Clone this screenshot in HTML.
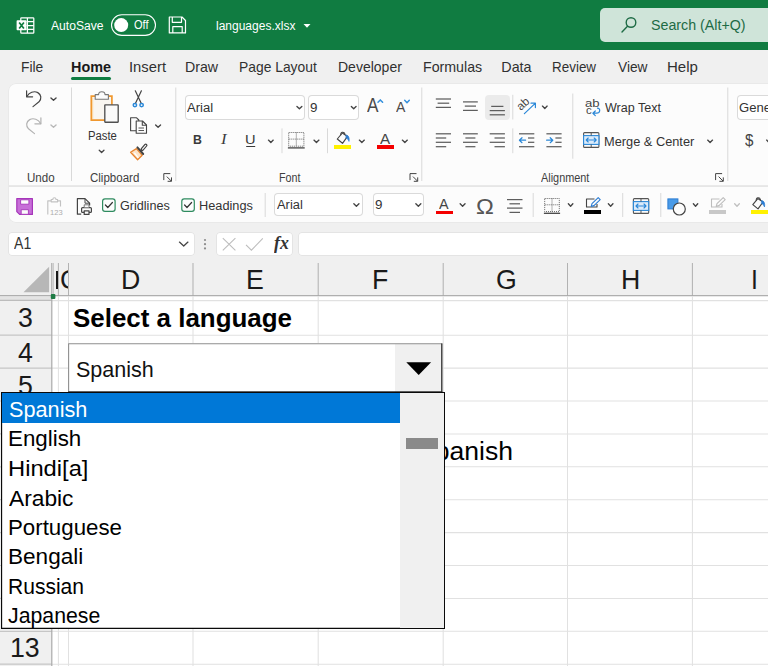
<!DOCTYPE html>
<html><head><meta charset="utf-8"><title>languages.xlsx - Excel</title>
<style>
html,body{margin:0;padding:0;}
body{width:768px;height:666px;overflow:hidden;position:relative;background:#F0F0F0;font-family:"Liberation Sans", sans-serif;}
.t{position:absolute;white-space:nowrap;transform-origin:0 0;display:block;}
.b{position:absolute;box-sizing:border-box;}
svg.ov{position:absolute;left:0;top:0;}
#root{position:absolute;left:0;top:0;width:768px;height:666px;overflow:hidden;}
</style></head><body><div id="root">
<div class="b" style="left:0px;top:0px;width:768px;height:50px;background:#107C41;"></div>
<div class="b" style="left:600px;top:8px;width:180px;height:34px;background:#CFE4D9;border-radius:5px;"></div>
<div class="b" style="left:8px;top:83px;width:782px;height:103px;background:#FCFCFC;box-shadow:inset 0 0 0 1px #E9E9E9;border-radius:8px 0 0 0;"></div>
<div class="b" style="left:8px;top:186px;width:782px;height:37px;background:#FCFCFC;box-shadow:inset 0 0 0 1px #E9E9E9;border-radius:0 0 0 8px;"></div>
<div class="b" style="left:8px;top:232px;width:186.5px;height:24px;background:#FFFFFF;box-shadow:inset 0 0 0 1px #E4E4E4;border-radius:4px;"></div>
<div class="b" style="left:216px;top:232px;width:76.5px;height:24px;background:#FFFFFF;box-shadow:inset 0 0 0 1px #E4E4E4;border-radius:4px;"></div>
<div class="b" style="left:298px;top:232px;width:492px;height:24px;background:#FFFFFF;box-shadow:inset 0 0 0 1px #E4E4E4;border-radius:4px;"></div>
<div class="b" style="left:52px;top:296.5px;width:716px;height:369.5px;background:#FFFFFF;"></div>
<svg class="ov" width="768" height="666" viewBox="0 0 768 666">
<line x1="52" y1="335.20" x2="768" y2="335.20" stroke="#E1E1E1" stroke-width="1.05"/>
<line x1="0" y1="335.20" x2="52" y2="335.20" stroke="#C6C6C6" stroke-width="1.2"/>
<line x1="52" y1="368.10" x2="768" y2="368.10" stroke="#E1E1E1" stroke-width="1.05"/>
<line x1="0" y1="368.10" x2="52" y2="368.10" stroke="#C6C6C6" stroke-width="1.2"/>
<line x1="52" y1="401.00" x2="768" y2="401.00" stroke="#E1E1E1" stroke-width="1.05"/>
<line x1="0" y1="401.00" x2="52" y2="401.00" stroke="#C6C6C6" stroke-width="1.2"/>
<line x1="52" y1="433.90" x2="768" y2="433.90" stroke="#E1E1E1" stroke-width="1.05"/>
<line x1="0" y1="433.90" x2="52" y2="433.90" stroke="#C6C6C6" stroke-width="1.2"/>
<line x1="52" y1="466.80" x2="768" y2="466.80" stroke="#E1E1E1" stroke-width="1.05"/>
<line x1="0" y1="466.80" x2="52" y2="466.80" stroke="#C6C6C6" stroke-width="1.2"/>
<line x1="52" y1="499.70" x2="768" y2="499.70" stroke="#E1E1E1" stroke-width="1.05"/>
<line x1="0" y1="499.70" x2="52" y2="499.70" stroke="#C6C6C6" stroke-width="1.2"/>
<line x1="52" y1="532.60" x2="768" y2="532.60" stroke="#E1E1E1" stroke-width="1.05"/>
<line x1="0" y1="532.60" x2="52" y2="532.60" stroke="#C6C6C6" stroke-width="1.2"/>
<line x1="52" y1="565.50" x2="768" y2="565.50" stroke="#E1E1E1" stroke-width="1.05"/>
<line x1="0" y1="565.50" x2="52" y2="565.50" stroke="#C6C6C6" stroke-width="1.2"/>
<line x1="52" y1="598.40" x2="768" y2="598.40" stroke="#E1E1E1" stroke-width="1.05"/>
<line x1="0" y1="598.40" x2="52" y2="598.40" stroke="#C6C6C6" stroke-width="1.2"/>
<line x1="52" y1="631.30" x2="768" y2="631.30" stroke="#E1E1E1" stroke-width="1.05"/>
<line x1="0" y1="631.30" x2="52" y2="631.30" stroke="#C6C6C6" stroke-width="1.2"/>
<line x1="52" y1="664.20" x2="768" y2="664.20" stroke="#E1E1E1" stroke-width="1.05"/>
<line x1="0" y1="664.20" x2="52" y2="664.20" stroke="#C6C6C6" stroke-width="1.2"/>
<line x1="52" y1="300.6" x2="768" y2="300.6" stroke="#E1E1E1" stroke-width="1.05"/>
<rect x="0" y="296" width="52" height="4" fill="#E4E4E4"/>
<line x1="0" y1="300.3" x2="52" y2="300.3" stroke="#B0B0B0" stroke-width="1"/>
<line x1="58.4" y1="296.5" x2="58.4" y2="666" stroke="#E1E1E1" stroke-width="1.05"/>
<line x1="58.4" y1="263" x2="58.4" y2="296" stroke="#B2B2B2" stroke-width="1.05"/>
<line x1="68.5" y1="296.5" x2="68.5" y2="666" stroke="#E1E1E1" stroke-width="1.05"/>
<line x1="68.5" y1="263" x2="68.5" y2="296" stroke="#B2B2B2" stroke-width="1.05"/>
<line x1="193" y1="296.5" x2="193" y2="666" stroke="#E1E1E1" stroke-width="1.05"/>
<line x1="193" y1="263" x2="193" y2="296" stroke="#B2B2B2" stroke-width="1.05"/>
<line x1="318.2" y1="296.5" x2="318.2" y2="666" stroke="#E1E1E1" stroke-width="1.05"/>
<line x1="318.2" y1="263" x2="318.2" y2="296" stroke="#B2B2B2" stroke-width="1.05"/>
<line x1="443.2" y1="296.5" x2="443.2" y2="666" stroke="#E1E1E1" stroke-width="1.05"/>
<line x1="443.2" y1="263" x2="443.2" y2="296" stroke="#B2B2B2" stroke-width="1.05"/>
<line x1="567.5" y1="296.5" x2="567.5" y2="666" stroke="#E1E1E1" stroke-width="1.05"/>
<line x1="567.5" y1="263" x2="567.5" y2="296" stroke="#B2B2B2" stroke-width="1.05"/>
<line x1="692.4" y1="296.5" x2="692.4" y2="666" stroke="#E1E1E1" stroke-width="1.05"/>
<line x1="692.4" y1="263" x2="692.4" y2="296" stroke="#B2B2B2" stroke-width="1.05"/>
<line x1="0" y1="295.6" x2="768" y2="295.6" stroke="#A8A8A8" stroke-width="1"/>
<line x1="51.8" y1="263" x2="51.8" y2="666" stroke="#ABABAB" stroke-width="1.2"/>
<line x1="53.4" y1="263" x2="53.4" y2="296" stroke="#C6C6C6" stroke-width="1"/>
<path d="M23.5 292.2h25.6v-25.4z" fill="#B7B7B7"/>
<rect x="50.8" y="294" width="4.6" height="5" rx="1" fill="#1E7B45"/>
</svg>
<span class="t" style="left:50.97px;top:19.00px;font-size:13.7px;line-height:13.7px;color:#FFFFFF;font-family:'Liberation Sans', sans-serif;transform:scaleX(0.8848);">AutoSave</span>
<span class="t" style="left:134.48px;top:19.00px;font-size:12px;line-height:12px;color:#FFFFFF;font-family:'Liberation Sans', sans-serif;transform:scaleX(0.9186);">Off</span>
<span class="t" style="left:215.69px;top:19.00px;font-size:13.7px;line-height:13.7px;color:#FFFFFF;font-family:'Liberation Sans', sans-serif;transform:scaleX(0.8768);">languages.xlsx</span>
<span class="t" style="left:650.86px;top:18.00px;font-size:14px;line-height:14px;color:#1E6B45;font-family:'Liberation Sans', sans-serif;transform:scaleX(1.0165);">Search (Alt+Q)</span>
<span class="t" style="left:21.36px;top:60.00px;font-size:14.3px;line-height:14.3px;color:#303030;font-family:'Liberation Sans', sans-serif;transform:scaleX(0.9654);">File</span>
<span class="t" style="left:70.53px;top:60.00px;font-size:14.3px;line-height:14.3px;color:#1A1A1A;font-family:'Liberation Sans', sans-serif;font-weight:bold;transform:scaleX(1.0055);">Home</span>
<span class="t" style="left:129.13px;top:60.00px;font-size:14.3px;line-height:14.3px;color:#303030;font-family:'Liberation Sans', sans-serif;transform:scaleX(1.0344);">Insert</span>
<span class="t" style="left:185.33px;top:60.00px;font-size:14.3px;line-height:14.3px;color:#303030;font-family:'Liberation Sans', sans-serif;transform:scaleX(0.9924);">Draw</span>
<span class="t" style="left:239.36px;top:60.00px;font-size:14.3px;line-height:14.3px;color:#303030;font-family:'Liberation Sans', sans-serif;transform:scaleX(0.9683);">Page Layout</span>
<span class="t" style="left:338.34px;top:60.00px;font-size:14.3px;line-height:14.3px;color:#303030;font-family:'Liberation Sans', sans-serif;transform:scaleX(0.9800);">Developer</span>
<span class="t" style="left:422.83px;top:60.00px;font-size:14.3px;line-height:14.3px;color:#303030;font-family:'Liberation Sans', sans-serif;transform:scaleX(0.9928);">Formulas</span>
<span class="t" style="left:501.32px;top:60.00px;font-size:14.3px;line-height:14.3px;color:#303030;font-family:'Liberation Sans', sans-serif;">Data</span>
<span class="t" style="left:551.89px;top:60.00px;font-size:14.3px;line-height:14.3px;color:#303030;font-family:'Liberation Sans', sans-serif;transform:scaleX(0.9397);">Review</span>
<span class="t" style="left:617.93px;top:60.00px;font-size:14.3px;line-height:14.3px;color:#303030;font-family:'Liberation Sans', sans-serif;transform:scaleX(0.9606);">View</span>
<span class="t" style="left:666.76px;top:60.00px;font-size:14.3px;line-height:14.3px;color:#303030;font-family:'Liberation Sans', sans-serif;transform:scaleX(1.0494);">Help</span>
<div class="b" style="left:71px;top:77px;width:39.5px;height:2.5px;background:#107C41;border-radius:1.5px;"></div>
<span class="t" style="left:27.10px;top:172.00px;font-size:12.3px;line-height:12.3px;color:#404040;font-family:'Liberation Sans', sans-serif;transform:scaleX(0.9409);">Undo</span>
<span class="t" style="left:90.42px;top:172.00px;font-size:12.3px;line-height:12.3px;color:#404040;font-family:'Liberation Sans', sans-serif;transform:scaleX(0.9364);">Clipboard</span>
<span class="t" style="left:278.61px;top:172.00px;font-size:12.3px;line-height:12.3px;color:#404040;font-family:'Liberation Sans', sans-serif;transform:scaleX(0.8726);">Font</span>
<span class="t" style="left:541.47px;top:172.00px;font-size:12.3px;line-height:12.3px;color:#404040;font-family:'Liberation Sans', sans-serif;transform:scaleX(0.8849);">Alignment</span>
<span class="t" style="left:87.57px;top:129.00px;font-size:13.7px;line-height:13.7px;color:#333333;font-family:'Liberation Sans', sans-serif;transform:scaleX(0.8260);">Paste</span>
<div class="b" style="left:184.7px;top:94.6px;width:120.60000000000002px;height:25.200000000000003px;background:#FFFFFF;box-shadow:inset 0 0 0 1px #DADADA;border-radius:4px;"></div>
<div class="b" style="left:308.2px;top:94.6px;width:51.30000000000001px;height:25.200000000000003px;background:#FFFFFF;box-shadow:inset 0 0 0 1px #DADADA;border-radius:4px;"></div>
<div class="b" style="left:737px;top:94.6px;width:63px;height:25.200000000000003px;background:#FFFFFF;box-shadow:inset 0 0 0 1px #DADADA;border-radius:4px;"></div>
<span class="t" style="left:187.47px;top:101.00px;font-size:13.7px;line-height:13.7px;color:#333333;font-family:'Liberation Sans', sans-serif;transform:scaleX(0.9531);">Arial</span>
<span class="t" style="left:310.16px;top:101.00px;font-size:13.7px;line-height:13.7px;color:#333333;font-family:'Liberation Sans', sans-serif;transform:scaleX(0.9785);">9</span>
<span class="t" style="left:739.05px;top:101.00px;font-size:13.7px;line-height:13.7px;color:#333333;font-family:'Liberation Sans', sans-serif;transform:scaleX(0.9557);">Gene</span>
<span class="t" style="left:366.96px;top:95.00px;font-size:20.3px;line-height:20.3px;color:#4A4A4A;font-family:'Liberation Sans', sans-serif;transform:scaleX(0.8477);">A</span>
<span class="t" style="left:395.86px;top:99.00px;font-size:15.4px;line-height:15.4px;color:#4A4A4A;font-family:'Liberation Sans', sans-serif;transform:scaleX(0.9115);">A</span>
<span class="t" style="left:193.17px;top:133.00px;font-size:13.6px;line-height:13.6px;color:#3A3A3A;font-family:'Liberation Sans', sans-serif;font-weight:bold;transform:scaleX(0.9041);">B</span>
<span class="t" style="left:221.08px;top:133.00px;font-size:14px;line-height:14px;color:#3A3A3A;font-family:'Liberation Serif', serif;font-style:italic;transform:scaleX(1.1921);">I</span>
<span class="t" style="left:245.37px;top:133.00px;font-size:13.7px;line-height:13.7px;color:#3A3A3A;font-family:'Liberation Sans', sans-serif;transform:scaleX(1.0676);">U</span>
<div class="b" style="left:334px;top:145.3px;width:16.69999999999999px;height:3.6999999999999886px;background:#FFF100;"></div>
<span class="t" style="left:380.46px;top:131.00px;font-size:15.5px;line-height:15.5px;color:#444444;font-family:'Liberation Sans', sans-serif;transform:scaleX(0.9836);">A</span>
<div class="b" style="left:376.8px;top:145.3px;width:16.80000000000001px;height:3.6999999999999886px;background:#F40000;"></div>
<div class="b" style="left:484.7px;top:94.6px;width:25.100000000000023px;height:25.200000000000003px;background:#EBEBEB;border-radius:4px;"></div>
<span class="t" style="left:517.6px;top:103.0px;font-size:11.6px;line-height:10px;color:#444;transform:rotate(-42deg);transform-origin:0 50%;font-family:'Liberation Sans',sans-serif;">ab</span>
<span class="t" style="left:585.44px;top:99.00px;font-size:10.4px;line-height:10.4px;color:#444;font-family:'Liberation Sans', sans-serif;transform:scaleX(1.2633);">ab</span>
<span class="t" style="left:585.82px;top:106.00px;font-size:10.4px;line-height:10.4px;color:#444;font-family:'Liberation Sans', sans-serif;transform:scaleX(1.0957);">c</span>
<span class="t" style="left:604.64px;top:101.00px;font-size:13.7px;line-height:13.7px;color:#333333;font-family:'Liberation Sans', sans-serif;transform:scaleX(0.9164);">Wrap Text</span>
<span class="t" style="left:603.64px;top:135.00px;font-size:13.7px;line-height:13.7px;color:#333333;font-family:'Liberation Sans', sans-serif;transform:scaleX(0.9344);">Merge &amp; Center</span>
<span class="t" style="left:744.65px;top:132.00px;font-size:17px;line-height:17px;color:#444444;font-family:'Liberation Sans', sans-serif;transform:scaleX(0.8879);">$</span>
<span class="t" style="left:50.03px;top:209.00px;font-size:7.9px;line-height:7.9px;color:#ADADAD;font-family:'Liberation Sans', sans-serif;transform:scaleX(0.9555);">123</span>
<span class="t" style="left:120.17px;top:199.00px;font-size:13.7px;line-height:13.7px;color:#333333;font-family:'Liberation Sans', sans-serif;transform:scaleX(0.9209);">Gridlines</span>
<span class="t" style="left:199.25px;top:199.00px;font-size:13.7px;line-height:13.7px;color:#333333;font-family:'Liberation Sans', sans-serif;transform:scaleX(0.9312);">Headings</span>
<div class="b" style="left:274px;top:193.2px;width:89px;height:22.700000000000017px;background:#FFFFFF;box-shadow:inset 0 0 0 1px #DADADA;border-radius:4px;"></div>
<div class="b" style="left:372.7px;top:193.2px;width:51.80000000000001px;height:22.700000000000017px;background:#FFFFFF;box-shadow:inset 0 0 0 1px #DADADA;border-radius:4px;"></div>
<span class="t" style="left:276.77px;top:198.00px;font-size:13.7px;line-height:13.7px;color:#333333;font-family:'Liberation Sans', sans-serif;transform:scaleX(0.9417);">Arial</span>
<span class="t" style="left:375.16px;top:198.00px;font-size:13.7px;line-height:13.7px;color:#333333;font-family:'Liberation Sans', sans-serif;transform:scaleX(0.9785);">9</span>
<span class="t" style="left:439.46px;top:197.00px;font-size:14.4px;line-height:14.4px;color:#444444;font-family:'Liberation Sans', sans-serif;transform:scaleX(0.9958);">A</span>
<div class="b" style="left:435.7px;top:210.7px;width:17.0px;height:3.8000000000000114px;background:#F40000;"></div>
<span class="t" style="left:475.59px;top:196.00px;font-size:22.6px;line-height:22.6px;color:#555;font-family:'Liberation Sans', sans-serif;transform:scaleX(1.0553);">Ω</span>
<div class="b" style="left:584.2px;top:210.3px;width:17.199999999999932px;height:4.099999999999994px;background:#000000;"></div>
<div class="b" style="left:709.2px;top:210.3px;width:17.199999999999932px;height:4.099999999999994px;background:#C8C8C8;"></div>
<div class="b" style="left:750.5px;top:210.3px;width:19.5px;height:4.099999999999994px;background:#FFF100;"></div>
<span class="t" style="left:13.96px;top:235.00px;font-size:16.1px;line-height:16.1px;color:#333333;font-family:'Liberation Sans', sans-serif;transform:scaleX(0.8741);">A1</span>
<span class="t" style="left:273.80px;top:234.00px;font-size:18px;line-height:18px;color:#333;font-family:'Liberation Serif', serif;font-weight:bold;font-style:italic;transform:scaleX(0.9907);">fx</span>
<span class="t" style="left:121.09px;top:266.00px;font-size:27.8px;line-height:27.8px;color:#1A1A1A;font-family:'Liberation Sans', sans-serif;transform:scaleX(0.9606);">D</span>
<span class="t" style="left:246.15px;top:266.00px;font-size:27.8px;line-height:27.8px;color:#1A1A1A;font-family:'Liberation Sans', sans-serif;transform:scaleX(0.9606);">E</span>
<span class="t" style="left:371.69px;top:266.00px;font-size:27.8px;line-height:27.8px;color:#1A1A1A;font-family:'Liberation Sans', sans-serif;transform:scaleX(0.9606);">F</span>
<span class="t" style="left:495.55px;top:266.00px;font-size:27.8px;line-height:27.8px;color:#1A1A1A;font-family:'Liberation Sans', sans-serif;transform:scaleX(0.9606);">G</span>
<span class="t" style="left:620.65px;top:266.00px;font-size:27.8px;line-height:27.8px;color:#1A1A1A;font-family:'Liberation Sans', sans-serif;transform:scaleX(0.9606);">H</span>
<span class="t" style="left:751.30px;top:266.00px;font-size:27.8px;line-height:27.8px;color:#1A1A1A;font-family:'Liberation Sans', sans-serif;transform:scaleX(0.8944);">I</span>
<div class="b" style="left:55.7px;top:270.8px;width:2.299999999999997px;height:18.099999999999966px;background:#1A1A1A;"></div>
<div class="b" style="left:58.9px;top:264px;width:9.4px;height:31px;overflow:hidden;"><span class="t" style="left:1.00px;top:2px;font-size:27.8px;line-height:27.8px;transform:scaleX(0.96);color:#1A1A1A;font-family:'Liberation Sans',sans-serif;">C</span></div>
<span class="t" style="left:18.16px;top:304.00px;font-size:27.8px;line-height:27.8px;color:#1A1A1A;font-family:'Liberation Sans', sans-serif;transform:scaleX(0.9606);">3</span>
<span class="t" style="left:18.16px;top:339.00px;font-size:27.8px;line-height:27.8px;color:#1A1A1A;font-family:'Liberation Sans', sans-serif;transform:scaleX(0.9606);">4</span>
<span class="t" style="left:18.09px;top:372.00px;font-size:27.8px;line-height:27.8px;color:#1A1A1A;font-family:'Liberation Sans', sans-serif;transform:scaleX(0.9606);">5</span>
<span class="t" style="left:10.24px;top:634.00px;font-size:27.8px;line-height:27.8px;color:#1A1A1A;font-family:'Liberation Sans', sans-serif;transform:scaleX(0.9606);">13</span>
<span class="t" style="left:73.42px;top:305.00px;font-size:26.7px;line-height:26.7px;color:#000;font-family:'Liberation Sans', sans-serif;font-weight:bold;transform:scaleX(0.9715);">Select a language</span>
<span class="t" style="left:417.40px;top:438.00px;font-size:26.7px;line-height:26.7px;color:#000;font-family:'Liberation Sans', sans-serif;transform:scaleX(0.9948);">Spanish</span>
<div class="b" style="left:68.3px;top:343.4px;width:374.0px;height:48.900000000000034px;background:#FFFFFF;"></div>
<div class="b" style="left:395.2px;top:344.2px;width:46.19999999999999px;height:47.400000000000034px;background:#F0F0F0;"></div>
<span class="t" style="left:75.83px;top:359.00px;font-size:22.5px;line-height:22.5px;color:#111;font-family:'Liberation Sans', sans-serif;transform:scaleX(0.9574);">Spanish</span>
<svg class="ov" width="768" height="666" viewBox="0 0 768 666">
<g fill="none" stroke="#fff" stroke-width="1.25"><rect x="20.8" y="17.8" width="13" height="15.4" rx="0.8"/><path d="M26.4 21.7h7.4M26.4 25.5h7.4M26.4 29.3h7.4M27.4 18v15"/></g>
<rect x="16.6" y="20.3" width="9.9" height="10" rx="0.8" fill="#fff"/>
<path d="M19.2 22.5l4.7 6M23.9 22.5l-4.7 6" stroke="#107C41" stroke-width="1.7" fill="none"/>
<rect x="111.5" y="14.8" width="44" height="20.6" rx="10.3" fill="none" stroke="#fff" stroke-width="1.1"/>
<circle cx="121.2" cy="25.1" r="7" fill="#fff"/>
<g fill="none" stroke="#fff" stroke-width="1.2" stroke-linejoin="round"><path d="M169.3 17h12.7l3.5 3.5v12.4h-16.2z"/><path d="M172.3 17v5.3h9.2v-5.3"/><path d="M172.8 32.9v-6.3h9.4v6.3"/></g>
<path d="M303.5 24h7l-3.5 3.8z" fill="#fff"/>
<g fill="none" stroke="#1E6B45" stroke-width="1.4" stroke-linecap="round"><circle cx="631" cy="22.5" r="4.8"/><path d="M627.5 26.2L622 32"/></g>
<line x1="71.5" y1="87.5" x2="71.5" y2="181" stroke="#D9D9D9" stroke-width="1"/>
<line x1="175.8" y1="87.5" x2="175.8" y2="181" stroke="#D9D9D9" stroke-width="1"/>
<line x1="421.8" y1="87.5" x2="421.8" y2="181" stroke="#D9D9D9" stroke-width="1"/>
<line x1="727.8" y1="87.5" x2="727.8" y2="181" stroke="#D9D9D9" stroke-width="1"/>
<line x1="572.8" y1="93.5" x2="572.8" y2="158.7" stroke="#D9D9D9" stroke-width="1"/>
<line x1="282" y1="128.4" x2="282" y2="153.2" stroke="#D9D9D9" stroke-width="1"/>
<line x1="327.5" y1="128.4" x2="327.5" y2="153.2" stroke="#D9D9D9" stroke-width="1"/>
<line x1="512.8" y1="94.8" x2="512.8" y2="119.5" stroke="#D9D9D9" stroke-width="1"/>
<line x1="512.8" y1="128.4" x2="512.8" y2="153.2" stroke="#D9D9D9" stroke-width="1"/>
<g transform="translate(26,90)" fill="none" stroke="#444444" stroke-width="1.2" stroke-linecap="round" stroke-linejoin="round"><path d="M0.6 0.8v6h6"/><path d="M0.9 6.5C3 2.5 8 0.5 11.8 2.6c3.6 2 4 6.4 1.2 9.2L7 16.6"/></g>
<g transform="translate(41.5,117) scale(-1,1)" fill="none" stroke="#B2B2B2" stroke-width="1.2" stroke-linecap="round" stroke-linejoin="round"><path d="M0.6 0.8v6h6"/><path d="M0.9 6.5C3 2.5 8 0.5 11.8 2.6c3.6 2 4 6.4 1.2 9.2L7 16.6"/></g>
<path d="M50.949999999999996 97.89999999999999 L53.5 100.25 L56.050000000000004 97.89999999999999" fill="none" stroke="#444444" stroke-width="1.35" stroke-linecap="round" stroke-linejoin="round"/>
<path d="M50.949999999999996 124.89999999999999 L53.5 127.25 L56.050000000000004 124.89999999999999" fill="none" stroke="#B8B8B8" stroke-width="1.35" stroke-linecap="round" stroke-linejoin="round"/>
<g fill="none" stroke-linejoin="miter"><path d="M91.3 96.2h20.6v24h-20.6z" fill="#F9F6F1" stroke="#F0982F" stroke-width="1.7"/><path d="M92.6 97.4v21.6" stroke="#FBD9A8" stroke-width="1.2"/><path d="M95.2 99.2v-4.6h3.4c0-3.8 6.4-3.8 6.4 0h3.4v4.6z" fill="#FCFCFC" stroke="#777" stroke-width="1.1" stroke-linejoin="round"/><rect x="104.8" y="104.8" width="13.4" height="17.4" rx="0.4" fill="#FAFAFA" stroke="#505050" stroke-width="1.35"/></g>
<path d="M99.25 150.29999999999998 L101.6 152.45 L103.94999999999999 150.29999999999998" fill="none" stroke="#444444" stroke-width="1.35" stroke-linecap="round" stroke-linejoin="round"/>
<g fill="none" stroke-linecap="round"><path d="M135.3 90.8l5.9 12.4M141.4 90.8l-5.9 12.4" stroke="#444" stroke-width="1.2"/><circle cx="134.9" cy="105.1" r="1.7" stroke="#2B88D8" stroke-width="1.5"/><circle cx="141.6" cy="105.1" r="1.7" stroke="#2B88D8" stroke-width="1.5"/></g>
<g fill="#FCFCFC" stroke="#444" stroke-width="1.1" stroke-linejoin="round"><path d="M130.6 117.8h6l2.2 2.2v10.8h-8.2z"/><path d="M136.2 121h6.3l4 4v8.3h-10.3z"/><path d="M142.3 121v4.2h4.2" fill="none"/><path d="M138.5 128h5.5M138.5 130.5h5.5" stroke-width="0.9"/></g>
<path d="M155.65 124.89999999999999 L158.1 127.25 L160.54999999999998 124.89999999999999" fill="none" stroke="#444444" stroke-width="1.35" stroke-linecap="round" stroke-linejoin="round"/>
<g stroke-linejoin="round" stroke-linecap="round"><path d="M130.6 152.2l5.8-3.6 5.8 6.6-4.6 4.6z" fill="#FCE3C8" stroke="#E8842F" stroke-width="1.3"/><path d="M134.6 153.2l3.4 4.2" stroke="#fff" stroke-width="1.2" fill="none"/><path d="M145.8 145.2l-3.6 4.2" stroke="#444" stroke-width="3.4" fill="none"/><path d="M145.7 145.4l-3.2 3.7" stroke="#FCFCFC" stroke-width="1.1" fill="none"/><path d="M137.4 147.4l5.8 6.6" stroke="#444" stroke-width="2" fill="none"/></g>
<g fill="none" stroke="#444" stroke-width="1"><path d="M163.8 180.1v-6.5h6.5"/><path d="M166.8 176.6l4.5 4.5M171.5 177.4v3.9h-3.9"/></g>
<g fill="none" stroke="#444" stroke-width="1"><path d="M410 180.1v-6.5h6.5"/><path d="M413 176.6l4.5 4.5M417.7 177.4v3.9h-3.9"/></g>
<g fill="none" stroke="#444" stroke-width="1"><path d="M715.6 180.1v-6.5h6.5"/><path d="M718.6 176.6l4.5 4.5M723.3000000000001 177.4v3.9h-3.9"/></g>
<path d="M296.95 106.39999999999999 L299.4 108.75 L301.85 106.39999999999999" fill="none" stroke="#444444" stroke-width="1.35" stroke-linecap="round" stroke-linejoin="round"/>
<path d="M351.34999999999997 106.39999999999999 L353.7 108.75 L356.05 106.39999999999999" fill="none" stroke="#444444" stroke-width="1.35" stroke-linecap="round" stroke-linejoin="round"/>
<path d="M378 102.3l2.3-2.4 2.3 2.4" fill="none" stroke="#3590DC" stroke-width="1.5" stroke-linecap="round" stroke-linejoin="round"/>
<path d="M404.7 100.3l2.3 2.4 2.3-2.4" fill="none" stroke="#3590DC" stroke-width="1.5" stroke-linecap="round" stroke-linejoin="round"/>
<line x1="246.2" y1="146.5" x2="255.2" y2="146.5" stroke="#3A3A3A" stroke-width="1"/>
<path d="M268.45 140.1 L270.85 142.45 L273.25 140.1" fill="none" stroke="#444444" stroke-width="1.35" stroke-linecap="round" stroke-linejoin="round"/>
<g fill="none" stroke="#666" stroke-width="1" stroke-dasharray="1 1"><rect x="288.7" y="132.5" width="15.2" height="13.7"/><path d="M296.3 132.5v13.7M288.7 139.1h15.2"/></g>
<path d="M287.9 147.89999999999998h16.8" stroke="#444" stroke-width="1.3"/>
<path d="M313.95 140.1 L316.45000000000005 142.45 L318.95000000000005 140.1" fill="none" stroke="#444444" stroke-width="1.35" stroke-linecap="round" stroke-linejoin="round"/>
<g transform="translate(336.8,131.6)" stroke-linejoin="round" stroke-linecap="round"><path d="M0.5 7.4l5-6 5.2 3.4-5 6.9z" fill="#FCFCFC" stroke="#444" stroke-width="1.15"/><path d="M4 3.2c-0.6-3 3.4-3.6 4.2-0.6" fill="none" stroke="#444" stroke-width="1.05"/><path d="M9.6 3.4c2.4 0.4 3.2 3.2 2.6 6.4-0.5-1.6-1.4-2.8-2.8-3.4z" fill="#2B7CD3" stroke="#2B7CD3" stroke-width="0.7"/></g>
<path d="M359.34999999999997 140.1 L361.85 142.45 L364.35 140.1" fill="none" stroke="#444444" stroke-width="1.35" stroke-linecap="round" stroke-linejoin="round"/>
<path d="M402.34999999999997 140.1 L404.85 142.45 L407.35 140.1" fill="none" stroke="#444444" stroke-width="1.35" stroke-linecap="round" stroke-linejoin="round"/>
<line x1="435.8" y1="99" x2="451" y2="99" stroke="#5E5E5E" stroke-width="1.25"/>
<line x1="437.6" y1="103.2" x2="449.2" y2="103.2" stroke="#5E5E5E" stroke-width="1.25"/>
<line x1="435.8" y1="107.4" x2="451" y2="107.4" stroke="#5E5E5E" stroke-width="1.25"/>
<line x1="463" y1="101.9" x2="477.8" y2="101.9" stroke="#5E5E5E" stroke-width="1.25"/>
<line x1="464.8" y1="106.1" x2="476.0" y2="106.1" stroke="#5E5E5E" stroke-width="1.25"/>
<line x1="463" y1="110.4" x2="477.8" y2="110.4" stroke="#5E5E5E" stroke-width="1.25"/>
<line x1="491.2" y1="106.4" x2="503.4" y2="106.4" stroke="#5E5E5E" stroke-width="1.25"/>
<line x1="489.7" y1="110.6" x2="504.9" y2="110.6" stroke="#5E5E5E" stroke-width="1.25"/>
<line x1="489.7" y1="114.8" x2="504.9" y2="114.8" stroke="#5E5E5E" stroke-width="1.25"/>
<line x1="435.8" y1="133.8" x2="451" y2="133.8" stroke="#5E5E5E" stroke-width="1.25"/>
<line x1="435.8" y1="138" x2="446.2" y2="138" stroke="#5E5E5E" stroke-width="1.25"/>
<line x1="435.8" y1="142.3" x2="451" y2="142.3" stroke="#5E5E5E" stroke-width="1.25"/>
<line x1="435.8" y1="146.7" x2="446.2" y2="146.7" stroke="#5E5E5E" stroke-width="1.25"/>
<line x1="463" y1="133.8" x2="477.8" y2="133.8" stroke="#5E5E5E" stroke-width="1.25"/>
<line x1="465.4" y1="138" x2="475.40000000000003" y2="138" stroke="#5E5E5E" stroke-width="1.25"/>
<line x1="463" y1="142.3" x2="477.8" y2="142.3" stroke="#5E5E5E" stroke-width="1.25"/>
<line x1="465.4" y1="146.7" x2="475.40000000000003" y2="146.7" stroke="#5E5E5E" stroke-width="1.25"/>
<line x1="489.7" y1="133.8" x2="504.9" y2="133.8" stroke="#5E5E5E" stroke-width="1.25"/>
<line x1="494.5" y1="138" x2="504.9" y2="138" stroke="#5E5E5E" stroke-width="1.25"/>
<line x1="489.7" y1="142.3" x2="504.9" y2="142.3" stroke="#5E5E5E" stroke-width="1.25"/>
<line x1="494.5" y1="146.7" x2="504.9" y2="146.7" stroke="#5E5E5E" stroke-width="1.25"/>
<line x1="519" y1="133.8" x2="534.3" y2="133.8" stroke="#5E5E5E" stroke-width="1.25"/>
<line x1="528" y1="138" x2="534.3" y2="138" stroke="#5E5E5E" stroke-width="1.25"/>
<line x1="528" y1="142.3" x2="534.3" y2="142.3" stroke="#5E5E5E" stroke-width="1.25"/>
<line x1="519" y1="146.7" x2="534.3" y2="146.7" stroke="#5E5E5E" stroke-width="1.25"/>
<line x1="546.4" y1="133.8" x2="561.6" y2="133.8" stroke="#5E5E5E" stroke-width="1.25"/>
<line x1="555.4" y1="138" x2="561.6" y2="138" stroke="#5E5E5E" stroke-width="1.25"/>
<line x1="555.4" y1="142.3" x2="561.6" y2="142.3" stroke="#5E5E5E" stroke-width="1.25"/>
<line x1="546.4" y1="146.7" x2="561.6" y2="146.7" stroke="#5E5E5E" stroke-width="1.25"/>
<path d="M519.6 140.2h6M522 137.7l-2.6 2.5 2.6 2.5" fill="none" stroke="#2B88D8" stroke-width="1.2" stroke-linecap="round" stroke-linejoin="round"/>
<path d="M546.6 140.2h6M550.2 137.7l2.6 2.5-2.6 2.5" fill="none" stroke="#2B88D8" stroke-width="1.2" stroke-linecap="round" stroke-linejoin="round"/>
<path d="M524.4 113.6l10.8-10.2M531 103.2h4.4v4.4" fill="none" stroke="#2B88D8" stroke-width="1.2" stroke-linecap="round" stroke-linejoin="round"/>
<path d="M542.4499999999999 106.1 L544.8 108.45 L547.15 106.1" fill="none" stroke="#444444" stroke-width="1.35" stroke-linecap="round" stroke-linejoin="round"/>
<path d="M597.5 108.2c3 0 3.2 5-1 5h-3.5M595.3 111l-2.4 2.3 2.4 2.3" fill="none" stroke="#2B88D8" stroke-width="1.2" stroke-linecap="round" stroke-linejoin="round"/>
<g transform="translate(583,132)"><rect x="0.6" y="0.6" width="15.3" height="14.8" rx="1" fill="#FCFCFC" stroke="#555" stroke-width="1.1"/><rect x="0.6" y="3.6" width="15.3" height="8.8" fill="#DCEBFA" stroke="#2B88D8" stroke-width="1.1"/><path d="M8.2 0.6v3M8.2 12.4v3" stroke="#555" stroke-width="1"/><path d="M3.3 8h9.8M5.2 6l-2 2 2 2M11.2 6l2 2-2 2" fill="none" stroke="#2B88D8" stroke-width="1.1" stroke-linecap="round" stroke-linejoin="round"/></g>
<path d="M707.65 140.1 L710.1 142.45 L712.5500000000001 140.1" fill="none" stroke="#444444" stroke-width="1.35" stroke-linecap="round" stroke-linejoin="round"/>
<path d="M766.65 140.1 L769.0 142.45 L771.35 140.1" fill="none" stroke="#444444" stroke-width="1.35" stroke-linecap="round" stroke-linejoin="round"/>
<line x1="8.5" y1="186.5" x2="768" y2="186.5" stroke="#E6E6E6" stroke-width="1"/>
<g stroke-linejoin="round"><path d="M16.8 198.6h15.6v15.8h-12.8l-2.8-2.8z" fill="#C76FD8" stroke="#A636BA" stroke-width="1.2"/><rect x="20.6" y="199.8" width="8.3" height="4.4" fill="#FCFCFC" stroke="#A636BA" stroke-width="0.9"/><rect x="21.2" y="209.7" width="7.2" height="4.6" fill="#FCFCFC" stroke="#A636BA" stroke-width="0.9"/></g>
<g fill="none" stroke="#C2C2C2" stroke-width="1.15" stroke-linejoin="round"><path d="M51 200.8h-3.2v13.8"/><path d="M57.5 200.8h3v5.6"/><path d="M51.2 201.8v-2.3h1.6c0-2.3 3.2-2.3 3.2 0h1.6v2.3z"/></g>
<g fill="#FCFCFC" stroke="#444" stroke-width="1.2" stroke-linejoin="round"><path d="M81.2 214.2h-3.8v-15.6h7.6l4.6 4.6v2.4"/><path d="M85 198.8v4.4h4.4" fill="none" stroke-width="1"/><rect x="81.6" y="207.6" width="9.8" height="4.8" rx="1"/><path d="M84.2 207.4v-2.6h4.8v2.6" stroke="#777" stroke-width="1"/><path d="M84.2 210.8h4.8v3.6h-4.8z"/></g>
<rect x="102.6" y="198.79999999999998" width="12.5" height="12.5" rx="2.4" fill="#FCFCFC" stroke="#2E8B5F" stroke-width="1.2"/>
<path d="M105.4 205.0l2.4 2.5 4.6-5" fill="none" stroke="#333" stroke-width="1.2" stroke-linecap="round" stroke-linejoin="round"/>
<rect x="181.79999999999998" y="198.79999999999998" width="12.5" height="12.5" rx="2.4" fill="#FCFCFC" stroke="#2E8B5F" stroke-width="1.2"/>
<path d="M184.6 205.0l2.4 2.5 4.6-5" fill="none" stroke="#333" stroke-width="1.2" stroke-linecap="round" stroke-linejoin="round"/>
<line x1="265.2" y1="193" x2="265.2" y2="217" stroke="#D9D9D9" stroke-width="1"/>
<line x1="533.2" y1="193" x2="533.2" y2="217" stroke="#D9D9D9" stroke-width="1"/>
<line x1="622.7" y1="193" x2="622.7" y2="217" stroke="#D9D9D9" stroke-width="1"/>
<line x1="660.8" y1="193" x2="660.8" y2="217" stroke="#D9D9D9" stroke-width="1"/>
<path d="M353.84999999999997 203.79999999999998 L356.4 206.25 L358.95000000000005 203.79999999999998" fill="none" stroke="#444444" stroke-width="1.35" stroke-linecap="round" stroke-linejoin="round"/>
<path d="M415.84999999999997 203.79999999999998 L418.35 206.25 L420.85 203.79999999999998" fill="none" stroke="#444444" stroke-width="1.35" stroke-linecap="round" stroke-linejoin="round"/>
<path d="M460.15 203.79999999999998 L462.6 206.25 L465.05 203.79999999999998" fill="none" stroke="#444444" stroke-width="1.35" stroke-linecap="round" stroke-linejoin="round"/>
<line x1="507" y1="199.6" x2="522.5" y2="199.6" stroke="#5E5E5E" stroke-width="1.25"/>
<line x1="509.5" y1="203.8" x2="520.0" y2="203.8" stroke="#5E5E5E" stroke-width="1.25"/>
<line x1="507" y1="208.1" x2="522.5" y2="208.1" stroke="#5E5E5E" stroke-width="1.25"/>
<line x1="509.5" y1="212.4" x2="520.0" y2="212.4" stroke="#5E5E5E" stroke-width="1.25"/>
<g fill="none" stroke="#666" stroke-width="1" stroke-dasharray="1 1"><rect x="544.7" y="198.5" width="14.6" height="13.1"/><path d="M552.0 198.5v13.1M544.7 204.8h14.6"/></g>
<path d="M543.9000000000001 213.29999999999998h16.2" stroke="#444" stroke-width="1.3"/>
<path d="M568.35 203.79999999999998 L570.6 206.25 L572.85 203.79999999999998" fill="none" stroke="#444444" stroke-width="1.35" stroke-linecap="round" stroke-linejoin="round"/>
<g transform="translate(585,197.8)" stroke-linejoin="round"><path d="M9.5 1.2h-8v8h10.5v-3" fill="none" stroke="#444" stroke-width="1.1"/><path d="M6.2 8.6l0.8-2.8 6.2-6 2 2-6.2 6z" fill="#FCFCFC" stroke="#2B7CD3" stroke-width="1.1"/></g>
<path d="M608.35 203.79999999999998 L610.6500000000001 206.25 L612.95 203.79999999999998" fill="none" stroke="#444444" stroke-width="1.35" stroke-linecap="round" stroke-linejoin="round"/>
<g transform="translate(632.8,198)"><rect x="0.6" y="0.6" width="15.3" height="14.8" rx="1" fill="#FCFCFC" stroke="#555" stroke-width="1.1"/><rect x="0.6" y="3.6" width="15.3" height="8.8" fill="#DCEBFA" stroke="#2B88D8" stroke-width="1.1"/><path d="M8.2 0.6v3M8.2 12.4v3" stroke="#555" stroke-width="1"/><path d="M3.3 8h9.8M5.2 6l-2 2 2 2M11.2 6l2 2-2 2" fill="none" stroke="#2B88D8" stroke-width="1.1" stroke-linecap="round" stroke-linejoin="round"/></g>
<rect x="667.9" y="198.9" width="10" height="10" fill="#4A9BE8" stroke="#2B7CD3" stroke-width="1"/>
<circle cx="679.3" cy="209" r="6" fill="#FCFCFC" stroke="#444" stroke-width="1.2"/>
<path d="M693.35 203.79999999999998 L695.55 206.25 L697.75 203.79999999999998" fill="none" stroke="#444444" stroke-width="1.35" stroke-linecap="round" stroke-linejoin="round"/>
<g transform="translate(710,197.8)" stroke-linejoin="round"><path d="M9.5 1.2h-8v8h10.5v-3" fill="none" stroke="#BDBDBD" stroke-width="1.1"/><path d="M6.2 8.6l0.8-2.8 6.2-6 2 2-6.2 6z" fill="#FCFCFC" stroke="#BDBDBD" stroke-width="1.1"/></g>
<path d="M734.65 203.79999999999998 L737.0 206.25 L739.35 203.79999999999998" fill="none" stroke="#C0C0C0" stroke-width="1.35" stroke-linecap="round" stroke-linejoin="round"/>
<g transform="translate(752.3,197.2)" stroke-linejoin="round" stroke-linecap="round"><path d="M0.5 7.4l5-6 5.2 3.4-5 6.9z" fill="#FCFCFC" stroke="#444" stroke-width="1.15"/><path d="M4 3.2c-0.6-3 3.4-3.6 4.2-0.6" fill="none" stroke="#444" stroke-width="1.05"/><path d="M9.6 3.4c2.4 0.4 3.2 3.2 2.6 6.4-0.5-1.6-1.4-2.8-2.8-3.4z" fill="#2B7CD3" stroke="#2B7CD3" stroke-width="0.7"/></g>
<path d="M179.45000000000002 242.1 L183.7 245.95 L187.95 242.1" fill="none" stroke="#444" stroke-width="1.3" stroke-linecap="round" stroke-linejoin="round"/>
<circle cx="205" cy="240" r="1.1" fill="#8C8C8C"/>
<circle cx="205" cy="244.2" r="1.1" fill="#8C8C8C"/>
<circle cx="205" cy="248.4" r="1.1" fill="#8C8C8C"/>
<path d="M222.8 238.2l12.6 12.2M235.4 238.2l-12.6 12.2" stroke="#BDBDBD" stroke-width="1.1" fill="none"/>
<path d="M246 244.8l5.4 5.4 11.4-11.8" stroke="#BDBDBD" stroke-width="1.1" fill="none"/>
<line x1="68.3" y1="343.7" x2="442.3" y2="343.7" stroke="#8E8E8E" stroke-width="1.1"/>
<line x1="68.6" y1="343.4" x2="68.6" y2="392.3" stroke="#8E8E8E" stroke-width="1.1"/>
<line x1="441.8" y1="343.4" x2="441.8" y2="392.3" stroke="#2B2B2B" stroke-width="1.3"/>
<line x1="68.3" y1="391.9" x2="442.3" y2="391.9" stroke="#2B2B2B" stroke-width="1.3"/>
<path d="M406.3 362.2h24.8l-12.4 12.9z" fill="#000"/>
</svg>
<div class="b" style="left:0.8px;top:392px;width:444px;height:237.4px;background:#fff;box-shadow:inset 0 0 0 1.15px #0A0A0A;"></div>
<div class="b" style="left:400.2px;top:393.1px;width:43.5px;height:235.19999999999993px;background:#F0F0F0;"></div>
<div class="b" style="left:2px;top:393.1px;width:397.8px;height:29.5px;background:#0078D7;"></div>
<div class="b" style="left:406.3px;top:438.3px;width:32.0px;height:10.899999999999977px;background:#8A8A8A;"></div>
<span class="t" style="left:8.62px;top:399.00px;font-size:22.5px;line-height:22.5px;color:#fff;font-family:'Liberation Sans', sans-serif;transform:scaleX(0.9637);">Spanish</span>
<span class="t" style="left:7.76px;top:428.00px;font-size:22.5px;line-height:22.5px;color:#000;font-family:'Liberation Sans', sans-serif;transform:scaleX(0.9932);">English</span>
<span class="t" style="left:7.64px;top:458.00px;font-size:22.5px;line-height:22.5px;color:#000;font-family:'Liberation Sans', sans-serif;transform:scaleX(1.0543);">Hindi[a]</span>
<span class="t" style="left:8.74px;top:488.00px;font-size:22.5px;line-height:22.5px;color:#000;font-family:'Liberation Sans', sans-serif;transform:scaleX(1.0109);">Arabic</span>
<span class="t" style="left:7.76px;top:517.00px;font-size:22.5px;line-height:22.5px;color:#000;font-family:'Liberation Sans', sans-serif;transform:scaleX(0.9900);">Portuguese</span>
<span class="t" style="left:7.74px;top:546.00px;font-size:22.5px;line-height:22.5px;color:#000;font-family:'Liberation Sans', sans-serif;transform:scaleX(1.0025);">Bengali</span>
<span class="t" style="left:7.87px;top:576.00px;font-size:22.5px;line-height:22.5px;color:#000;font-family:'Liberation Sans', sans-serif;transform:scaleX(0.9344);">Russian</span>
<span class="t" style="left:7.98px;top:605.00px;font-size:22.5px;line-height:22.5px;color:#000;font-family:'Liberation Sans', sans-serif;transform:scaleX(0.9455);">Japanese</span>
</div></body></html>
